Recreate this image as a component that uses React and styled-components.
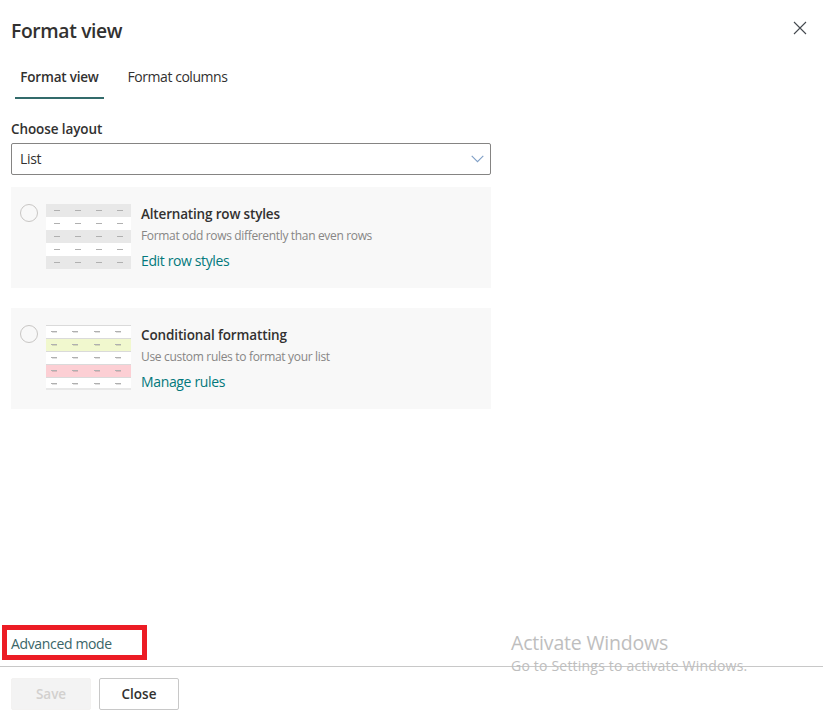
import React, { useState } from 'react';
import styled, { createGlobalStyle } from 'styled-components';

const options = [
  {
    id: 'alternating',
    title: 'Alternating row styles',
    description: 'Format odd rows differently than even rows',
    action: 'Edit row styles',
    dashX: [8, 29, 50, 71],
    rows: ['#e8e8e8', '#ffffff', '#e8e8e8', '#ffffff', '#e8e8e8'],
    lined: false,
    spacing: [-0.17, -0.34, -0.37],
  },
  {
    id: 'conditional',
    title: 'Conditional formatting',
    description: 'Use custom rules to format your list',
    action: 'Manage rules',
    dashX: [5, 26, 48, 69],
    rows: ['#ffffff', '#f1f8ce', '#ffffff', '#fccfd4', '#ffffff'],
    lined: true,
    spacing: [-0.13, -0.32, -0.35],
  },
];

function RowsPreview({ rows, dashX, lined }) {
  return (
    <Preview viewBox="0 0 85 65" shapeRendering="crispEdges">
      {rows.map((color, i) => (
        <g key={i}>
          <rect x="0" y={i * 13} width="85" height="13" fill={color} />
          {lined && <rect x="0" y={i * 13} width="85" height="1" fill="#dadada" />}
          {dashX.map((x) => (
            <g key={x}>
              <rect x={x} y={i * 13 + 6} width="6" height="1" fill="#b0b0b0" />
              {lined && (
                <rect x={x + 1} y={i * 13 + 7} width="5" height="1" fill="#000000" opacity="0.12" />
              )}
            </g>
          ))}
        </g>
      ))}
      {lined && <rect x="0" y="63" width="85" height="2" fill="#e8e8e8" />}
    </Preview>
  );
}

function App() {
  const [tab, setTab] = useState('view');

  return (
    <>
      <GlobalStyle />
      <Panel>
        <Header>
          <Title>Format view</Title>
          <CloseIcon aria-label="Close panel">
            <svg width="14" height="14" viewBox="0 0 14 14">
              <path d="M1 1L13 13M13 1L1 13" stroke="#44494f" strokeWidth="1.1" />
            </svg>
          </CloseIcon>
        </Header>

        <Tabs>
          <Tab $active={tab === 'view'} $width={89} onClick={() => setTab('view')}>
            Format view
          </Tab>
          <Tab $active={tab === 'columns'} $width={115} onClick={() => setTab('columns')}>
            Format columns
          </Tab>
        </Tabs>

        <Content>
          <Label>Choose layout</Label>
          <Dropdown>
            <span>List</span>
            <svg width="13" height="8" viewBox="0 0 13 8">
              <path d="M0.7 0.8L6.5 6.6L12.3 0.8" fill="none" stroke="#7f9fc6" strokeWidth="1.1" />
            </svg>
          </Dropdown>

          {options.map((option) => (
            <Card key={option.id}>
              <Radio />
              <RowsPreview rows={option.rows} dashX={option.dashX} lined={option.lined} />
              <CardText>
                <CardTitle $spacing={option.spacing[0]}>{option.title}</CardTitle>
                <CardDescription $spacing={option.spacing[1]}>{option.description}</CardDescription>
                <CardLink $spacing={option.spacing[2]}>{option.action}</CardLink>
              </CardText>
            </Card>
          ))}
        </Content>

        <Highlight>
          <AdvancedLink>Advanced mode</AdvancedLink>
        </Highlight>

        <Footer>
          <Button disabled>Save</Button>
          <Button>Close</Button>
        </Footer>

        <Watermark>
          <h2>Activate Windows</h2>
          <p>Go to Settings to activate Windows.</p>
        </Watermark>
      </Panel>
    </>
  );
}

const GlobalStyle = createGlobalStyle`
  * {
    box-sizing: border-box;
  }

  body {
    margin: 0;
    background: #ffffff;
    color: #323130;
    font-family: "Open Sans", "Noto Sans", sans-serif;
    font-size: 14px;
  }

  button {
    font-family: inherit;
    font-size: inherit;
    color: inherit;
    padding: 0;
    border: 0;
    background: none;
  }
`;

const Panel = styled.div`
  position: relative;
  display: flex;
  flex-direction: column;
  width: 823px;
  height: 717px;
  overflow: hidden;
`;

const Header = styled.div`
  display: flex;
  justify-content: space-between;
  height: 55px;
  padding: 17px 16px 0 11px;
`;

const Title = styled.h1`
  margin: 0;
  font-size: 19.3px;
  font-weight: 600;
  line-height: 27px;
  letter-spacing: -0.35px;
`;

const CloseIcon = styled.button`
  display: flex;
  height: 14px;
  margin-top: 4px;
`;

const Tabs = styled.div`
  display: flex;
  gap: 16px;
  padding-left: 15px;
`;

const Tab = styled.button`
  width: ${({ $width }) => $width}px;
  height: 44px;
  border-bottom: 2px solid ${({ $active }) => ($active ? '#336b6b' : 'transparent')};
  font-size: ${({ $active }) => ($active ? 13.5 : 14)}px;
  font-weight: ${({ $active }) => ($active ? 600 : 400)};
  line-height: 44px;
  letter-spacing: ${({ $active }) => ($active ? -0.2 : -0.45)}px;
  white-space: nowrap;
`;

const Content = styled.div`
  flex: 1;
  padding: 20px 0 0 11px;
  width: 491px;
`;

const Label = styled.div`
  height: 24px;
  font-size: 13.5px;
  font-weight: 600;
  line-height: 21px;
  letter-spacing: -0.1px;
`;

const Dropdown = styled.div`
  display: flex;
  align-items: center;
  justify-content: space-between;
  height: 32px;
  margin-bottom: 12px;
  padding: 0 6px 0 8px;
  border: 1px solid #858483;
  border-radius: 2px;
  line-height: 20px;
  letter-spacing: -0.35px;
`;

const Card = styled.div`
  display: flex;
  height: 101px;
  margin-bottom: 20px;
  padding: 17px 9px 0;
  background: #f8f8f8;
`;

const Radio = styled.div`
  flex: none;
  width: 18px;
  height: 18px;
  border: 1px solid #c8c6c4;
  border-radius: 50%;
`;

const Preview = styled.svg`
  flex: none;
  width: 85px;
  height: 65px;
  margin: 0 10px 0 8px;
`;

const CardText = styled.div`
  white-space: nowrap;
`;

const CardTitle = styled.div`
  font-size: 13.5px;
  font-weight: 600;
  line-height: 20px;
  letter-spacing: ${({ $spacing }) => $spacing}px;
`;

const CardDescription = styled.div`
  margin-top: 4px;
  font-size: 12px;
  line-height: 16px;
  color: #878685;
  letter-spacing: ${({ $spacing }) => $spacing}px;
`;

const CardLink = styled.div`
  margin-top: 7px;
  line-height: 20px;
  color: #03787c;
  letter-spacing: ${({ $spacing }) => $spacing}px;
`;

const Highlight = styled.div`
  width: 145px;
  height: 35px;
  margin: 0 0 6px 2px;
  padding-left: 4px;
  border: 5px solid #ec1c24;
`;

const AdvancedLink = styled.div`
  line-height: 28px;
  letter-spacing: -0.35px;
  color: #3a6568;
`;

const Footer = styled.div`
  display: flex;
  gap: 8px;
  height: 51px;
  padding: 11px 0 0 11px;
  border-top: 1px solid #c8c8c8;
`;

const Button = styled.button`
  width: 80px;
  height: 32px;
  border: 1px solid #c8c8c8;
  border-radius: 2px;
  font-size: 13.5px;
  font-weight: 600;
  line-height: 20px;

  &:disabled {
    border-color: #f3f2f1;
    background: #f3f3f3;
    color: #d2d0ce;
  }
`;

const Watermark = styled.div`
  position: absolute;
  left: 511px;
  top: 629px;
  color: #bebebe;
  white-space: nowrap;

  h2 {
    margin: 0;
    font-size: 19.5px;
    font-weight: 400;
    line-height: 28px;
    letter-spacing: -0.18px;
  }

  p {
    margin: 0;
    font-size: 14px;
    line-height: 18px;
    letter-spacing: 0.2px;
  }
`;

export default App;
